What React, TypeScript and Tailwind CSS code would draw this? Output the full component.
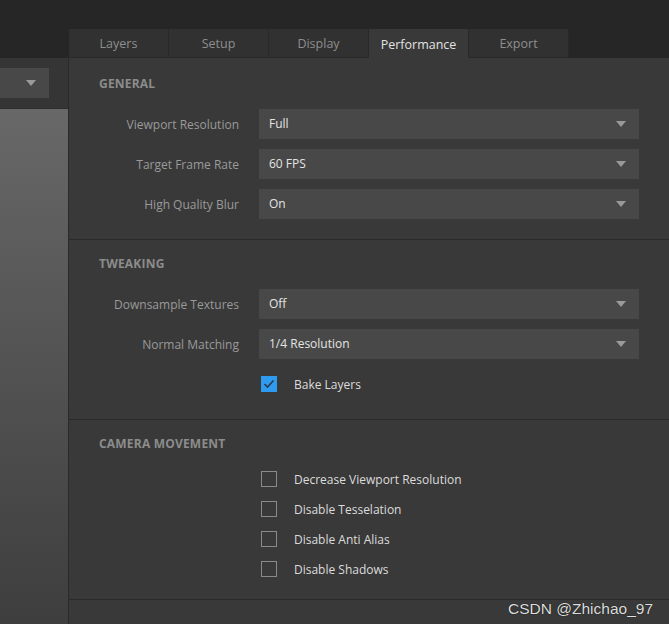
const tabs = ["Layers", "Setup", "Display", "Performance", "Export"];

function Arrow() {
    return (
        <svg width="10" height="6" viewBox="0 0 10 6" className="shrink-0">
            <polygon points="0,0 10,0 5,6" fill="#9a9a9a" />
        </svg>
    );
}

function Select({ value }: { value: string }) {
    return (
        <div className="flex h-[30px] w-[380px] items-center justify-between bg-[#484848] pl-[10px] pr-[13px] text-[12px] text-[#e4e4e4]">
            <span>{value}</span>
            <Arrow />
        </div>
    );
}

function Row({ label, value }: { label: string; value: string }) {
    return (
        <div className="flex items-center">
            <div className="w-[170px] pt-[2px] text-right text-[12px] text-[#9a9a9a]">
                {label}
            </div>
            <div className="ml-[20px]">
                <Select value={value} />
            </div>
        </div>
    );
}

function Check({ label, checked }: { label: string; checked?: boolean }) {
    return (
        <div className="flex h-[30px] items-center pl-[192px]">
            {checked ? (
                <div className="flex h-[16px] w-[16px] items-center justify-center bg-[#2f9bf0]">
                    <svg width="12" height="10" viewBox="0 0 12 10">
                        <polyline
                            points="1.5,5 4.5,8 10.5,1.5"
                            fill="none"
                            stroke="#2e3a46"
                            strokeWidth="1.6"
                        />
                    </svg>
                </div>
            ) : (
                <div className="h-[16px] w-[16px] border border-[#8a8a8a]" />
            )}
            <span className="ml-[17px] pt-px text-[12px] text-[#dcdcdc]">{label}</span>
        </div>
    );
}

function Heading({ children }: { children: string }) {
    return (
        <h2 className="pl-[30px] text-[12px] font-bold leading-[16px] tracking-[0.2px] text-[#8c8c8c]">
            {children}
        </h2>
    );
}

export default function App() {
    return (
        <div className="relative flex h-[624px] w-[669px] flex-col overflow-hidden bg-[#262626] font-['Open_Sans',sans-serif]">
            <div className="h-[29px] shrink-0" />

            <div className="flex h-[29px] shrink-0">
                <div className="w-[69px]" />
                {tabs.map((t) => (
                    <div
                        key={t}
                        className={
                            t === "Performance"
                                ? "flex w-[100px] items-center justify-center border-r border-[#292929] bg-[#393939] pt-[3px] text-[12.5px] text-[#e2e2e2]"
                                : "flex w-[100px] items-center justify-center border-r border-b border-[#292929] bg-[#313131] pt-[3px] text-[12.5px] text-[#8e8e8e]"
                        }
                    >
                        {t}
                    </div>
                ))}
            </div>

            <div className="flex flex-1">
                <div className="flex w-[69px] shrink-0 flex-col border-r border-[#2a2a2a]">
                    <div className="h-[50px] bg-[#353535] pt-[10px]">
                        <div className="flex h-[30px] w-[49px] items-center justify-end bg-[#484848] pr-[13px]">
                            <Arrow />
                        </div>
                    </div>
                    <div className="h-px bg-[#2e2e2e]" />
                    <div className="flex-1 bg-gradient-to-b from-[#686868] to-[#3e3e3e]" />
                </div>

                <div className="flex-1 bg-[#393939]">
                    <section className="border-b border-[#2a2a2a] pb-[20px] pt-[18px]">
                        <Heading>GENERAL</Heading>
                        <div className="mt-[17px] flex flex-col gap-[10px]">
                            <Row label="Viewport Resolution" value="Full" />
                            <Row label="Target Frame Rate" value="60 FPS" />
                            <Row label="High Quality Blur" value="On" />
                        </div>
                    </section>

                    <section className="border-b border-[#2a2a2a] pb-[20px] pt-[16px]">
                        <Heading>TWEAKING</Heading>
                        <div className="mt-[17px] flex flex-col gap-[10px]">
                            <Row label="Downsample Textures" value="Off" />
                            <Row label="Normal Matching" value="1/4 Resolution" />
                            <Check label="Bake Layers" checked />
                        </div>
                    </section>

                    <section className="border-b border-[#2a2a2a] pb-[15px] pt-[16px]">
                        <Heading>CAMERA MOVEMENT</Heading>
                        <div className="mt-[12px] flex flex-col">
                            <Check label="Decrease Viewport Resolution" />
                            <Check label="Disable Tesselation" />
                            <Check label="Disable Anti Alias" />
                            <Check label="Disable Shadows" />
                        </div>
                    </section>
                </div>
            </div>

            <div className="absolute bottom-[6px] right-[16px] font-['Liberation_Sans',sans-serif] text-[15.5px] leading-[18px] text-[#dedede] [text-shadow:0_0_1px_#000]">
                CSDN @Zhichao_97
            </div>
        </div>
    );
}
